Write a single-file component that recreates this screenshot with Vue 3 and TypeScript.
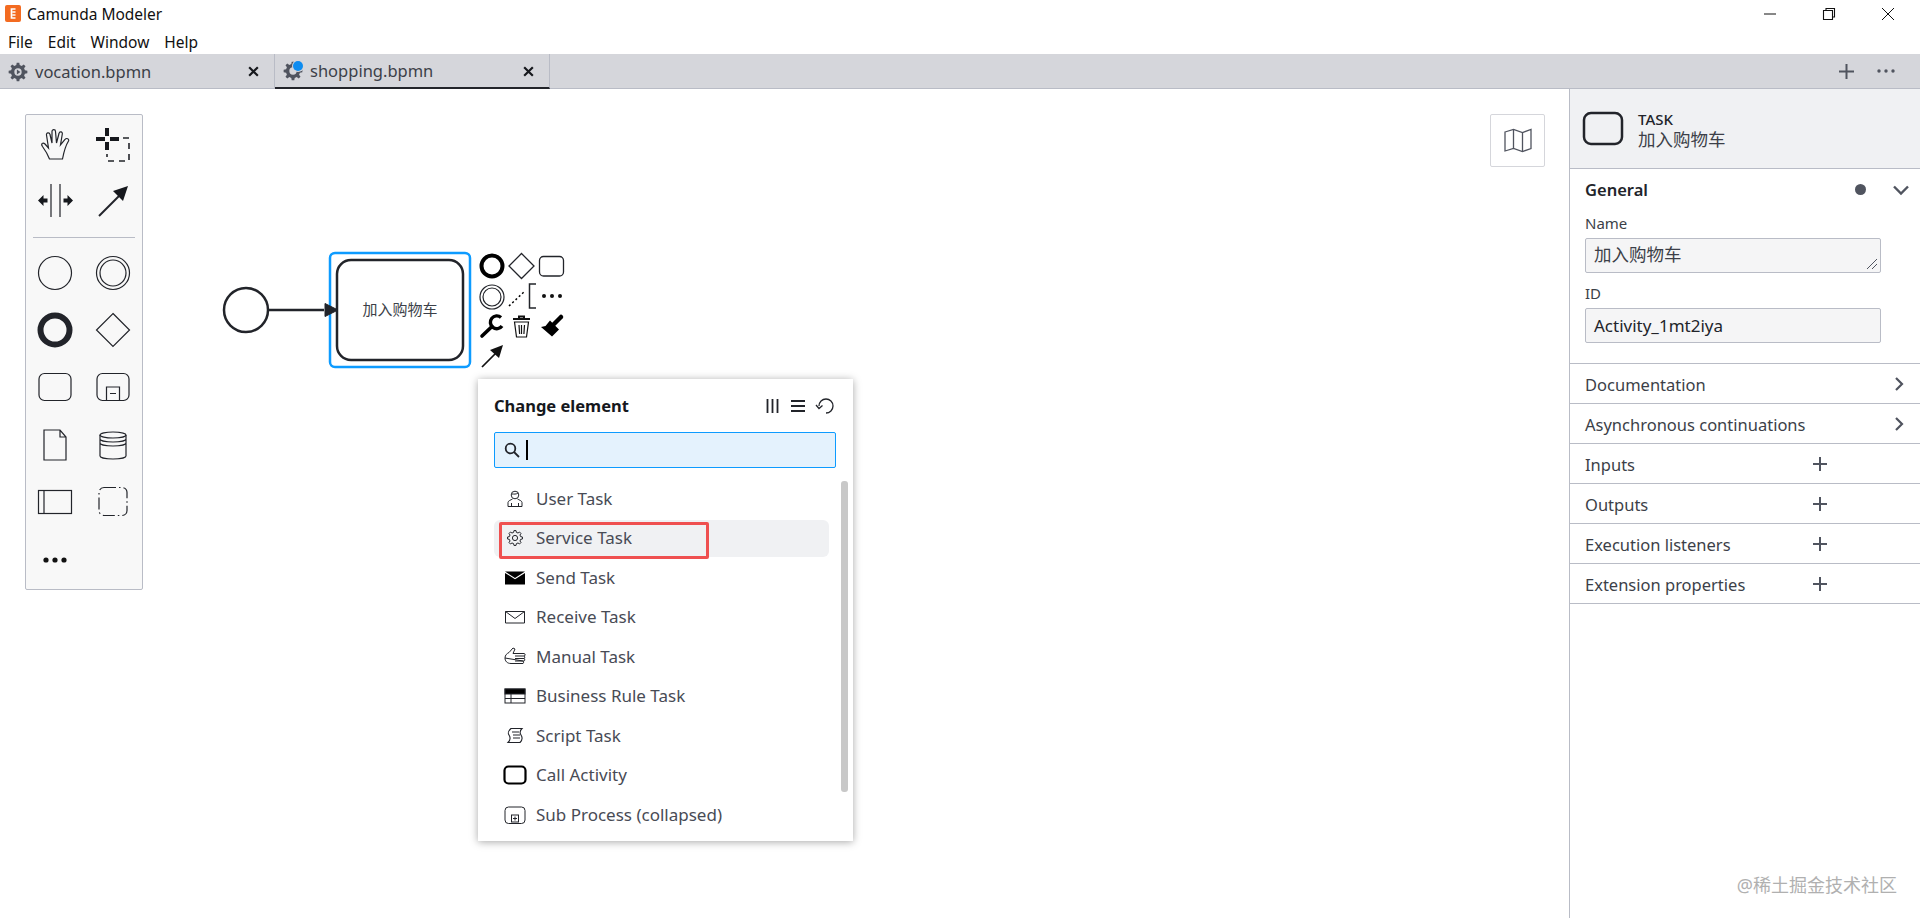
<template>
  <div class="app">
    <div class="titlebar">
      <div class="logo">
        <svg viewBox="0 0 16 17" width="16" height="17">
          <path d="M10.500 4H6.500v9h4M7.500 7h3M7.500 10h3" fill="none" stroke="#fff" stroke-width="1.700" />
        </svg>
      </div>
      <span class="app-name">Camunda Modeler</span>
      <div class="window-controls">
        <svg width="14" height="14" viewBox="0 0 14 14"><path d="M1 7h12" stroke="#111" stroke-width="1" /></svg>
        <svg width="14" height="14" viewBox="0 0 14 14"><path d="M1.500 3.500h9v9h-9zM4 3.500V1.500h8.500v8.500h-2" fill="none" stroke="#111" stroke-width="1.100" /></svg>
        <svg width="14" height="14" viewBox="0 0 14 14"><path d="M1 1l12 12M13 1L1 13" stroke="#111" stroke-width="1" /></svg>
      </div>
    </div>
    <nav class="menubar">
      <span v-for="m in menus" :key="m">{{ m }}</span>
    </nav>

    <div class="tabbar">
      <div v-for="tab in tabs" :key="tab.name" :class="['tab', { active: tab.active }]">
        <span class="tab-icon">
          <svg width="20" height="20" viewBox="0 0 18 18">
            <path :d="gearPath(9, 9, 8.500, 6.400, 8)" fill="#50545f" fill-rule="evenodd" />
            <circle cx="9" cy="9" r="3.300" fill="#d5d6db" />
            <path v-if="!tab.active" d="M8 6.800l3.200 2.200L8 11.200z" fill="#50545f" />
          </svg>
          <span v-if="tab.active" class="dirty-dot"></span>
        </span>
        <span class="tab-name">{{ tab.name }}</span>
        <svg class="tab-close" width="13" height="13" viewBox="0 0 12 12"><path d="M2 2l8 8M10 2l-8 8" stroke="#16181d" stroke-width="2" /></svg>
      </div>
      <div class="tab-actions">
        <svg width="17" height="17" viewBox="0 0 17 17"><path d="M8.500 1v15M1 8.500h15" stroke="#50545f" stroke-width="2" /></svg>
        <svg width="20" height="6" viewBox="0 0 20 6"><circle cx="3" cy="3" r="1.700" fill="#50545f" /><circle cx="10" cy="3" r="1.700" fill="#50545f" /><circle cx="17" cy="3" r="1.700" fill="#50545f" /></svg>
      </div>
    </div>

    <div class="workspace">
      <main class="canvas">
        <!-- diagram, in page coordinates -->
        <svg class="diagram" viewBox="0 89 1569 829" width="1569" height="829">
          <circle cx="246" cy="310" r="22" fill="#fff" stroke="#22242a" stroke-width="2.500" />
          <rect x="330" y="253" width="140" height="114" rx="5" fill="none" stroke="#0d9bff" stroke-width="2.500" />
          <rect x="337" y="260" width="126" height="100" rx="14" fill="#fff" stroke="#22242a" stroke-width="2.500" />
          <path d="M269 310h55" stroke="#22242a" stroke-width="2.500" />
          <path d="M325 303.500l13 6.500-13 6.500z" fill="#22242a" stroke="#22242a" stroke-width="1" />
          <text x="400" y="315" class="task-label" text-anchor="middle">加入购物车</text>

          <circle cx="492" cy="266" r="10.500" fill="#fff" stroke="#000" stroke-width="4" />
          <path d="M521.500 253.500l12.500 12.500-12.500 12.500L509 266z" fill="#fff" stroke="#22242a" stroke-width="1.300" />
          <rect x="539.500" y="256.500" width="24" height="19.500" rx="4" fill="#fff" stroke="#22242a" stroke-width="1.300" />
          <circle cx="492" cy="297" r="12" fill="#fff" stroke="#22242a" stroke-width="1.200" />
          <circle cx="492" cy="297" r="9" fill="#fff" stroke="#22242a" stroke-width="1.200" />
          <path d="M509 306l16-15" stroke="#000" stroke-width="1.500" stroke-dasharray="2 2.500" />
          <path d="M536 284h-6.500v24h6.500" fill="none" stroke="#22242a" stroke-width="1.500" />
          <g fill="#111"><circle cx="544" cy="296" r="2" /><circle cx="552" cy="296" r="2" /><circle cx="560" cy="296" r="2" /></g>
          <path d="M482 336l10-9.500" stroke="#000" stroke-width="3.600" stroke-linecap="round" />
          <path d="M502 326a6.400 6.400 0 1 1-1-8.500" fill="none" stroke="#000" stroke-width="3.400" />
          <path d="M513 319h17M519 319v-2.500h5v2.500" fill="none" stroke="#111" stroke-width="2" />
          <path d="M514.500 322l2 15h10l2-15zM519 325l.6 9M521.500 325v9M524.500 325l-.6 9" fill="#fff" stroke="#111" stroke-width="1.200" />
          <path d="M561 317l-8 8" stroke="#000" stroke-width="4.500" stroke-linecap="round" />
          <path d="M550 320.500l9 9-7 7-11-9.500 4.500-1z" fill="#000" />
          <path d="M482 367l14-14" stroke="#111" stroke-width="1.700" />
          <path d="M503 345l-4 13-9-8z" fill="#111" />
        </svg>

        <div class="palette">
          <div class="palette-grid">
            <div v-for="(tool, i) in tools" :key="i" class="palette-cell">
              <svg width="40" height="40" viewBox="0 0 40 40" fill="none" stroke="#22242a" stroke-width="1.200" v-html="tool"></svg>
            </div>
          </div>
          <div class="palette-sep"></div>
          <div class="palette-grid shapes">
            <div v-for="(shape, i) in shapes" :key="i" class="palette-cell">
              <svg width="40" height="40" viewBox="0 0 40 40" fill="none" stroke="#22242a" stroke-width="1.200" v-html="shape"></svg>
            </div>
          </div>
        </div>

        <button class="map-btn">
          <svg width="30" height="26" viewBox="0 0 30 26" fill="none" stroke="#50545f" stroke-width="1.300">
            <path d="M2 4l8.500-2.500 9 3 8.500-3v19l-8.500 3-9-3L2 23z" />
            <path d="M10.500 1.500v19.500M19.500 4.500V24" />
          </svg>
        </button>

        <div class="popup">
          <div class="popup-header">
            <span class="popup-title">Change element</span>
            <div class="popup-tools">
              <svg width="16" height="16" viewBox="0 0 16 16"><path d="M2.500 1v14M7.500 1v14M12.500 1v14" stroke="#22242a" stroke-width="1.800" /></svg>
              <svg width="16" height="16" viewBox="0 0 16 16"><path d="M1 3h14M1 8h14M1 13h14" stroke="#22242a" stroke-width="2" /></svg>
              <svg width="20" height="18" viewBox="0 0 20 18" fill="none" stroke="#22242a" stroke-width="1.300"><path d="M11 16A7 7 0 1 0 4 9" /><path d="M1 8l3 3.500 3.500-3" /></svg>
            </div>
          </div>
          <div class="popup-search">
            <svg width="16" height="16" viewBox="0 0 16 16" fill="none" stroke="#22242a" stroke-width="1.800"><circle cx="6.500" cy="6.500" r="4.800" /><path d="M10 10l5 5" /></svg>
            <span class="caret"></span>
          </div>
          <ul class="popup-list">
            <li v-for="item in items" :key="item.label" :class="{ hovered: item.label === 'Service Task' }">
              <svg width="24" height="24" viewBox="0 0 24 24" fill="none" stroke="#22242a" stroke-width="1" v-html="item.icon"></svg>
              <span>{{ item.label }}</span>
            </li>
          </ul>
          <div class="popup-scroll"></div>
          <div class="highlight"></div>
        </div>
      </main>

      <aside class="props">
        <header class="props-header">
          <svg width="42" height="36" viewBox="0 0 42 36"><rect x="2" y="2" width="38" height="31" rx="7" fill="none" stroke="#22242a" stroke-width="2.500" /></svg>
          <div class="props-title">
            <div class="props-type">TASK</div>
            <div class="props-name">加入购物车</div>
          </div>
        </header>

        <section class="group-general">
          <div class="group-head">
            <span class="group-title">General</span>
            <span class="dot"></span>
            <svg width="18" height="12" viewBox="0 0 18 12" fill="none" stroke="#50545f" stroke-width="2.400"><path d="M2 2.500l7 7 7-7" /></svg>
          </div>
          <label class="field-label">Name</label>
          <div class="field field-area">
            <span>{{ taskName }}</span>
            <svg class="grip" width="12" height="12" viewBox="0 0 12 12"><path d="M1 11L11 1M6 11l5-5" stroke="#50545f" stroke-width="1" /></svg>
          </div>
          <label class="field-label label-id">ID</label>
          <div class="field">Activity_1mt2iya</div>
        </section>

        <div v-for="row in chevronRows" :key="row" class="group-row">
          <span>{{ row }}</span>
          <svg class="chevron" width="12" height="16" viewBox="0 0 12 16" fill="none" stroke="#50545f" stroke-width="2.200"><path d="M3 2l6 6-6 6" /></svg>
        </div>
        <div v-for="row in plusRows" :key="row" class="group-row">
          <span class="row-label">{{ row }}</span>
          <svg width="16" height="16" viewBox="0 0 16 16"><path d="M8 1v14M1 8h14" stroke="#50545f" stroke-width="2" /></svg>
        </div>
      </aside>
    </div>

    <div class="watermark">@稀土掘金技术社区</div>
  </div>
</template>

<script setup lang="ts">
interface Tab {
  name: string
  active: boolean
}

interface PopupItem {
  label: string
  icon: string
}

// 齿轮轮廓，tabs 和 Service Task 共用
function gearPath(cx: number, cy: number, outer: number, inner: number, teeth: number): string {
  const step = (Math.PI * 2) / teeth
  const pts: string[] = []
  for (let i = 0; i < teeth; i++) {
    const a = i * step
    const w = step * 0.22
    const corners: [number, number][] = [
      [a - w * 1.4, inner],
      [a - w * 0.8, outer],
      [a + w * 0.8, outer],
      [a + w * 1.4, inner]
    ]
    for (const [ang, r] of corners) {
      pts.push(`${(cx + Math.cos(ang) * r).toFixed(2)} ${(cy + Math.sin(ang) * r).toFixed(2)}`)
    }
  }
  return `M${pts.join('L')}Z`
}

const menus = ['File', 'Edit', 'Window', 'Help']
const taskName = '加入购物车'

const tabs: Tab[] = [
  { name: 'vocation.bpmn', active: false },
  { name: 'shopping.bpmn', active: true }
]

const tools: string[] = [
  // hand
  '<path d="M14.500 35C13 31 10 26 7.500 22.500C5.500 19.500 8 18 10 20L13.500 24L11.500 11C11 8.500 14.500 8 15 10.500L17 19L17 7.500C17 5 20.500 5 20.500 7.500L21.500 19L24 9.500C24.500 7 27.800 7.500 27.300 10L25.500 21L30 15.500C31.500 13.500 34.500 15 33.500 17C31 21 29 27 27.500 35Z"/>',
  // lasso
  '<path d="M14 4v8M14 18v8M3 15h9M17 15h9" stroke="#16181d" stroke-width="4"/><path d="M30 14h6v23H14v-7" stroke-dasharray="6 5" stroke-width="1.600"/>',
  // space
  '<path d="M16 3v33M25 3v33"/><path d="M3 19.500l5.500-5.500v3.500h4v4h-4V25zM38 19.500L32.500 14v3.500h-4v4h4V25z" fill="#16181d" stroke="none"/>',
  // connect
  '<path d="M6 35l22-22" stroke-width="2"/><path d="M35 5l-5 15-10-10z" fill="#16181d" stroke="none"/>'
]

const shapes: string[] = [
  '<circle cx="20" cy="20" r="16.500"/>',
  '<circle cx="20" cy="20" r="16.500"/><circle cx="20" cy="20" r="13"/>',
  '<circle cx="20" cy="20" r="14.500" stroke-width="6"/>',
  '<path d="M20 3.500L36.500 20 20 36.500 3.500 20z"/>',
  '<rect x="4" y="6.500" width="32" height="27" rx="5.500"/>',
  '<rect x="4" y="6.500" width="32" height="27" rx="5.500"/><path d="M13.500 33.500V20h13v13.500M17 26.500h6"/>',
  '<path d="M9 5h16l6 7v23H9zM25 5v7h6"/>',
  '<ellipse cx="20" cy="10" rx="13" ry="3"/><path d="M7 10v21c0 1.700 5.800 3 13 3s13-1.300 13-3V10M7 14c0 1.700 5.800 3 13 3s13-1.300 13-3M7 18c0 1.700 5.800 3 13 3s13-1.300 13-3"/>',
  '<rect x="3.500" y="8.500" width="33" height="23"/><path d="M9 8.500v23"/>',
  '<rect x="6" y="5.500" width="28" height="28" rx="5" stroke-dasharray="12 3 1.500 3"/>',
  '<g fill="#111" stroke="none"><circle cx="11" cy="20" r="2.600"/><circle cx="20" cy="20" r="2.600"/><circle cx="29" cy="20" r="2.600"/></g>'
]

const items: PopupItem[] = [
  {
    label: 'User Task',
    icon: '<circle cx="12" cy="8" r="3.800"/><path d="M5 19.500v-4c0-1.800 3-2.500 4.500-3.500M19 19.500v-4c0-1.800-3-2.500-4.500-3.500M5 19.500h14M8.500 16v3.500M15.500 16v3.500M9 7c2 0 4 .5 6-1"/>'
  },
  {
    label: 'Service Task',
    icon: `<path d="${gearPath(12, 12, 7.500, 5.800, 8)}"/><circle cx="12" cy="12" r="2.600"/>`
  },
  { label: 'Send Task', icon: '<path d="M2 5.500h20l-10 6.500zM2 7l10 6.200L22 7V18.500H2z" fill="#000" stroke="none"/>' },
  { label: 'Receive Task', icon: '<path d="M2.500 6.500h19v11.500h-19zM2.500 6.500l9.500 7 9.500-7"/>' },
  {
    label: 'Manual Task',
    icon: '<path d="M2 13c0-3 2-4.500 4-5.500L10 3l2 1-2 4.500h11c1.500 0 1.500 2.500 0 2.500h-9M21 11c1 0 1 2.500 0 2.500h-9M21 13.500c1 0 1 2.500 0 2.500h-9M20 16c.8 0 .8 2.500 0 2.500H8C4 18.500 2 16 2 13z"/>'
  },
  {
    label: 'Business Rule Task',
    icon: '<rect x="2" y="5" width="20" height="14" /><rect x="2" y="5" width="20" height="5" fill="#000"/><path d="M2 14.500h20M8 10v9"/>'
  },
  {
    label: 'Script Task',
    icon: '<path d="M8 4.500h11c-2 2-3 3.500-1 6.500s1 5.500-1 7.500H5c2-2 3-4.500 1-7.500S6 6.500 8 4.500zM9 8h7M10 11h7M10 14h7" stroke-width="1.100"/>'
  },
  { label: 'Call Activity', icon: '<rect x="1.500" y="3.500" width="21" height="17" rx="4" stroke-width="2.200" stroke="#000"/>' },
  {
    label: 'Sub Process (collapsed)',
    icon: '<rect x="2" y="4" width="20" height="16.500" rx="3.500"/><rect x="8.500" y="12" width="7" height="7"/><path d="M10 15.500h4M12 13.500v4"/>'
  }
]

const chevronRows = ['Documentation', 'Asynchronous continuations']
const plusRows = ['Inputs', 'Outputs', 'Execution listeners', 'Extension properties']
</script>

<style scoped>
.app {
  position: relative;
  display: flex;
  flex-direction: column;
  width: 1920px;
  height: 918px;
  overflow: hidden;
  background: #fff;
  font-family: "Noto Sans", "Noto Sans CJK SC", sans-serif;
  color: #22242a;
}

.titlebar {
  display: flex;
  align-items: center;
  height: 27px;
  flex-shrink: 0;
  padding-left: 5px;
  box-sizing: border-box;
}

.logo {
  display: flex;
  align-items: center;
  justify-content: center;
  width: 16px;
  height: 17px;
  background: #f36b21;
  border-radius: 2px;
}

.app-name {
  margin-left: 6px;
  font-size: 15.500px;
  color: #111;
}

.window-controls {
  margin-left: auto;
  display: flex;
  gap: 45px;
  padding-right: 25px;
}

.menubar {
  display: flex;
  align-items: center;
  height: 27px;
  flex-shrink: 0;
  gap: 15px;
  padding-left: 8px;
  padding-top: 2px;
  box-sizing: border-box;
  font-size: 15.500px;
  color: #111;
}

.tabbar {
  display: flex;
  align-items: stretch;
  height: 35px;
  flex-shrink: 0;
  box-sizing: border-box;
  background: #d5d6db;
  border-bottom: 1px solid #b9bcc6;
}

.tab {
  position: relative;
  display: flex;
  align-items: center;
  width: 275px;
  height: 35px;
  box-sizing: border-box;
  padding-left: 8px;
  border-right: 1px solid #b9bcc6;
}

.tab.active {
  border-bottom: 2px solid #22242a;
}

.tab-icon {
  position: relative;
  display: flex;
  align-items: center;
  width: 20px;
}

.dirty-dot {
  position: absolute;
  top: 0;
  right: 0;
  width: 10px;
  height: 10px;
  border-radius: 50%;
  background: #0d8cf0;
  box-shadow: 0 0 0 1px #d5d6db;
}

.tab-name {
  margin-left: 7px;
  font-size: 16.500px;
  color: #3c3f48;
}

.tab-close {
  position: absolute;
  right: 14px;
  top: 11px;
}

.tab-actions {
  margin-left: auto;
  display: flex;
  align-items: center;
  gap: 21px;
  padding-right: 24px;
}

.workspace {
  display: flex;
  flex: 1;
  min-height: 0;
}

.canvas {
  position: relative;
  flex: 1;
  min-width: 0;
}

.diagram {
  position: absolute;
  left: 0;
  top: 0;
}

.task-label {
  font-family: "Noto Sans CJK SC", sans-serif;
  font-size: 15px;
  fill: #3c3f48;
}

.palette {
  position: absolute;
  left: 25px;
  top: 25px;
  width: 118px;
  height: 476px;
  box-sizing: border-box;
  background: #f8f8f8;
  border: 1px solid #b9bcc6;
  border-radius: 2px;
}

.palette-grid {
  display: grid;
  grid-template-columns: 58px 58px;
  grid-auto-rows: 57px;
}

.palette-grid.shapes {
  grid-auto-rows: 57.400px;
}

.palette-cell {
  display: flex;
  align-items: center;
  justify-content: center;
}

.palette-sep {
  height: 1px;
  margin: 8px 7px 6px;
  background: #b9bcc6;
}

.map-btn {
  position: absolute;
  left: 1490px;
  top: 25px;
  width: 55px;
  height: 53px;
  box-sizing: border-box;
  display: flex;
  align-items: center;
  justify-content: center;
  padding: 0;
  background: #fff;
  border: 1px solid #d5d6db;
  border-radius: 2px;
}

.popup {
  position: absolute;
  left: 478px;
  top: 290px;
  width: 375px;
  height: 462px;
  box-sizing: border-box;
  padding: 0 16px;
  background: #fff;
  box-shadow: 0 1px 8px rgba(0, 0, 0, 0.35);
}

.popup-header {
  display: flex;
  align-items: center;
  justify-content: space-between;
  height: 53px;
  padding-right: 2px;
}

.popup-title {
  font-size: 16.500px;
  font-weight: 700;
  color: #16181d;
}

.popup-tools {
  display: flex;
  align-items: center;
  gap: 9px;
}

.popup-search {
  display: flex;
  align-items: center;
  width: 342px;
  height: 36px;
  box-sizing: border-box;
  padding-left: 9px;
  background: #e4f2fd;
  border: 1px solid #0d9bff;
  border-radius: 2px;
}

.caret {
  width: 2px;
  height: 20px;
  margin-left: 6px;
  background: #000;
}

.popup-list {
  list-style: none;
  margin: 12px 0 0;
  padding: 0;
  width: 335px;
}

.popup-list li {
  display: flex;
  align-items: center;
  height: 37px;
  margin-bottom: 2.500px;
  padding-left: 9px;
  box-sizing: border-box;
  border-radius: 6px;
  font-size: 17px;
  color: #484b55;
}

.popup-list li.hovered {
  background: #f0f1f3;
}

.popup-list li span {
  margin-left: 9px;
  margin-top: -1px;
}

.popup-scroll {
  position: absolute;
  left: 363px;
  top: 102px;
  width: 7px;
  height: 311px;
  background: #c8c8c8;
  border-radius: 3px;
}

.highlight {
  position: absolute;
  left: 21px;
  top: 143px;
  width: 210px;
  height: 37px;
  box-sizing: border-box;
  border: 3px solid #ef5050;
  border-radius: 2px;
}

.watermark {
  position: absolute;
  right: 23px;
  bottom: 21px;
  font-size: 18px;
  color: #a8a8a8;
  opacity: 0.9;
}

.props {
  width: 351px;
  flex-shrink: 0;
  box-sizing: border-box;
  border-left: 1px solid #b9bcc6;
}

.props-header {
  display: flex;
  align-items: center;
  height: 80px;
  box-sizing: border-box;
  padding-left: 12px;
  background: #f0f1f3;
  border-bottom: 1px solid #b9bcc6;
}

.props-title {
  margin-left: 14px;
}

.props-type {
  font-size: 15px;
  line-height: 20px;
  font-weight: 500;
  color: #22242a;
}

.props-name {
  font-size: 17.500px;
  line-height: 20px;
  color: #3c3f48;
}

.group-general {
  height: 195px;
  box-sizing: border-box;
  padding: 0 39px 0 15px;
  border-bottom: 1px solid #b9bcc6;
}

.group-head {
  position: relative;
  display: flex;
  align-items: center;
  height: 41px;
}

.group-head svg {
  position: absolute;
  left: 307px;
  top: 15px;
}

.group-title {
  font-size: 16.500px;
  font-weight: 600;
  color: #22242a;
}

.dot {
  position: absolute;
  left: 270px;
  top: 15px;
  width: 11px;
  height: 11px;
  border-radius: 50%;
  background: #50545f;
}

.field-label {
  display: block;
  margin-top: 3px;
  font-size: 15px;
  line-height: 21px;
  color: #3c3f48;
}

.label-id {
  margin-top: 10px;
}

.field {
  position: relative;
  height: 35px;
  box-sizing: border-box;
  margin-top: 4px;
  padding-left: 8px;
  display: flex;
  align-items: center;
  background: #f5f5f6;
  border: 1px solid #b9bcc6;
  border-radius: 2px;
  font-size: 17px;
  color: #22242a;
}

.field-area span {
  font-size: 17.500px;
  margin-top: -4px;
  color: #3c3f48;
}

.grip {
  position: absolute;
  right: 2px;
  bottom: 2px;
}

.group-row {
  display: flex;
  align-items: center;
  height: 40px;
  box-sizing: border-box;
  padding-left: 15px;
  padding-top: 1px;
  border-bottom: 1px solid #b9bcc6;
  font-size: 16.500px;
  color: #3c3f48;
}

.chevron {
  margin-left: auto;
  margin-right: 15px;
}

.row-label {
  width: 227px;
}
</style>

<style>
body {
  margin: 0;
}
</style>
